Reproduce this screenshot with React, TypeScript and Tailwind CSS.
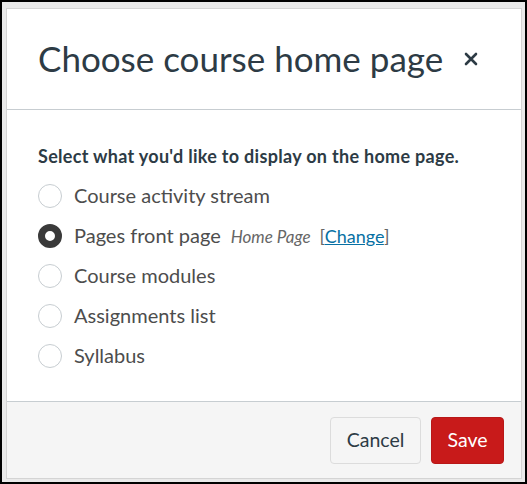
import { useState } from 'react'

const options = [
  { id: 'feed', label: 'Course activity stream' },
  { id: 'wiki', label: 'Pages front page' },
  { id: 'modules', label: 'Course modules' },
  { id: 'assignments', label: 'Assignments list' },
  { id: 'syllabus', label: 'Syllabus' },
]

export default function App() {
  const [selected, setSelected] = useState('wiki')

  return (
    <div
      className="w-[527px] h-[484px] border-2 border-black bg-[#e9e9e9] pt-[7px] pl-[5px] pr-[4px] pb-[4px]"
      style={{ fontFamily: 'Lato, "Open Sans", sans-serif' }}
    >
      <div className="flex flex-col h-full bg-white shadow-[0_0_0_1px_#d4d4d4]">
        {/* Header */}
        <div className="flex items-center justify-between h-[101px] border-b border-[#c7cdd1] pl-[31px] pr-[43px] shrink-0">
          <h1 className="text-[35px] text-[#2d3b45] leading-none pb-[2px]">
            Choose course home page
          </h1>
          <button className="text-[#2d3b45] pb-[1px]" aria-label="Close">
            <svg width="14" height="14" viewBox="0 0 14 14">
              <path d="M2 2 L12 12 M12 2 L2 12" stroke="#2d3b45" strokeWidth="2.6" strokeLinecap="round" />
            </svg>
          </button>
        </div>

        {/* Body */}
        <div className="flex-1 pl-[31px] pt-[35px]">
          <p className="text-[18px] font-bold text-[#2d3b45] leading-[22px] tracking-[0.3px] mb-[9px]">
            Select what you'd like to display on the home page.
          </p>
          <div className="flex flex-col">
            {options.map(o => (
              <label
                key={o.id}
                className="flex items-center h-[40px] cursor-pointer"
                onClick={() => setSelected(o.id)}
              >
                <span
                  className={
                    selected === o.id
                      ? 'w-[24px] h-[24px] rounded-full border-[7px] border-[#3a3a3a] bg-white shrink-0'
                      : 'w-[24px] h-[24px] rounded-full border border-[#c7cdd1] bg-white shrink-0'
                  }
                />
                <span className="ml-[12px] text-[20px] text-[#4d4d4d] leading-none pb-[2px]">{o.label}</span>
                {o.id === 'wiki' && (
                  <>
                    <span className="ml-[10px] text-[17px] italic text-[#666] leading-none">Home Page</span>
                    <span className="ml-[9px] text-[18px] text-[#666] leading-none">
                      [<a href="#" className="text-[#0770a3] underline">Change</a>]
                    </span>
                  </>
                )}
              </label>
            ))}
          </div>
        </div>

        {/* Footer */}
        <div className="flex items-center justify-end gap-[10px] h-[77px] border-t border-[#c7cdd1] bg-[#f5f5f5] pr-[17px] shrink-0">
          <button className="w-[91px] h-[47px] rounded-[4px] border border-[#dcdcdc] bg-[#f5f5f5] text-[19.5px] text-[#2d3b45]">
            Cancel
          </button>
          <button className="w-[73px] h-[47px] rounded-[4px] border border-[#b81818] bg-[#c81a1a] text-[19.5px] text-white">
            Save
          </button>
        </div>
      </div>
    </div>
  )
}
